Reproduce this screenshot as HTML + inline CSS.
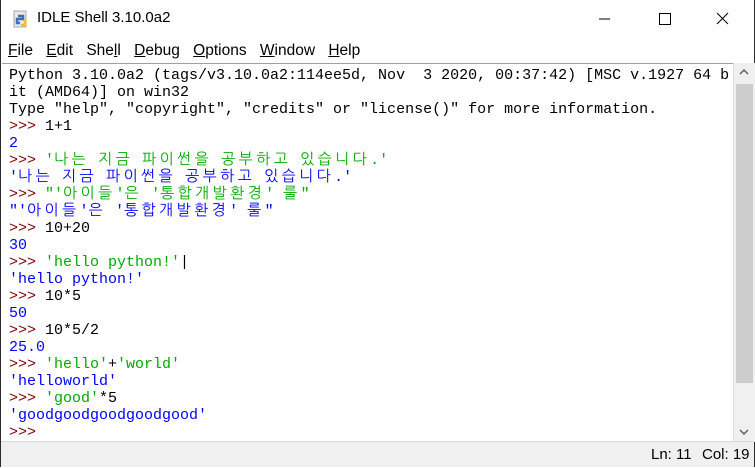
<!DOCTYPE html>
<html><head><meta charset="utf-8"><style>
body{margin:0;width:755px;height:468px;overflow:hidden;background:#fff;font-family:"Liberation Sans",sans-serif;}
.win{position:absolute;left:0;top:0;width:753px;height:466px;border:1px solid #2b2b2b;border-top:none;background:#fff;}
.title{position:absolute;left:36px;top:9px;font-size:15px;color:#000;}
.menu{position:absolute;left:7px;top:42px;font-size:15.5px;color:#000;}
.menu span{margin-right:9px;}
.text{position:absolute;left:1px;top:63px;width:731px;height:378px;border-top:1px solid #a0a0a0;background:#fff;}
pre{margin:0;position:absolute;left:7px;top:3px;font-family:"Liberation Mono","NanumGothic",monospace;font-size:15px;line-height:17px;color:#000;}
.k{letter-spacing:3.4px;}
.p{color:#7f0000}.s{color:#00aa00}.o{color:#0000ff}
.sb{position:absolute;left:732px;top:63px;width:21px;height:379px;background:#f0f0f0;border-left:1px solid #e0e0e0;}
.thumb{position:absolute;left:2px;top:21px;width:17px;height:299px;background:#cdcdcd;}
.status{position:absolute;left:0;top:441px;width:753px;height:25px;background:#f0f0f0;border-top:1px solid #d8d8d8;font-size:15px;}
</style></head><body>
<div class="win">
<svg style="position:absolute;left:12px;top:10px" width="16" height="18" viewBox="0 0 16 18"><rect x="1" y="1" width="12" height="16" fill="#e8e8e8" stroke="#aaa"/><path d="M5 6h5v3H4v4h3" stroke="#3a6fb0" stroke-width="2.5" fill="none"/><path d="M12 10v5H8" stroke="#f0c020" stroke-width="2.5" fill="none"/></svg>
<div class="title">IDLE Shell 3.10.0a2</div>
<svg style="position:absolute;left:598px;top:10px" width="150" height="18"><line x1="0" y1="9" x2="11" y2="9" stroke="#000"/><rect x="60.5" y="3.5" width="11" height="11" fill="none" stroke="#000"/><path d="M118 3l11 11M129 3l-11 11" stroke="#000"/></svg>
<div class="menu"><span><u>F</u>ile</span> <span><u>E</u>dit</span> <span>She<u>l</u>l</span> <span><u>D</u>ebug</span> <span><u>O</u>ptions</span> <span><u>W</u>indow</span> <span><u>H</u>elp</span></div>
<div class="text"><pre>Python 3.10.0a2 (tags/v3.10.0a2:114ee5d, Nov  3 2020, 00:37:42) [MSC v.1927 64 b
it (AMD64)] on win32
Type "help", "copyright", "credits" or "license()" for more information.
<span class="p">&gt;&gt;&gt; </span>1+1
<span class="o">2</span>
<span class="p">&gt;&gt;&gt; </span><span class="s">'<span class="k">나는</span> <span class="k">지금</span> <span class="k">파이썬을</span> <span class="k">공부하고</span> <span class="k">있습니다</span>.'</span>
<span class="o">'<span class="k">나는</span> <span class="k">지금</span> <span class="k">파이썬을</span> <span class="k">공부하고</span> <span class="k">있습니다</span>.'</span>
<span class="p">&gt;&gt;&gt; </span><span class="s">"'<span class="k">아이들</span>'<span class="k">은</span> '<span class="k">통합개발환경</span>' <span class="k">룰</span>"</span>
<span class="o">"'<span class="k">아이들</span>'<span class="k">은</span> '<span class="k">통합개발환경</span>' <span class="k">룰</span>"</span>
<span class="p">&gt;&gt;&gt; </span>10+20
<span class="o">30</span>
<span class="p">&gt;&gt;&gt; </span><span class="s">'hello python!'</span>|
<span class="o">'hello python!'</span>
<span class="p">&gt;&gt;&gt; </span>10*5
<span class="o">50</span>
<span class="p">&gt;&gt;&gt; </span>10*5/2
<span class="o">25.0</span>
<span class="p">&gt;&gt;&gt; </span><span class="s">'hello'</span>+<span class="s">'world'</span>
<span class="o">'helloworld'</span>
<span class="p">&gt;&gt;&gt; </span><span class="s">'good'</span>*5
<span class="o">'goodgoodgoodgoodgood'</span>
<span class="p">&gt;&gt;&gt; </span></pre></div>
<div class="sb"><div class="thumb"></div>
<svg style="position:absolute;left:5px;top:6px" width="10" height="6"><path d="M1 5l4-4 4 4" stroke="#606060" stroke-width="1.5" fill="none"/></svg>
<svg style="position:absolute;left:5px;top:366px" width="10" height="6"><path d="M1 1l4 4 4-4" stroke="#606060" stroke-width="1.5" fill="none"/></svg></div>
<div class="status"><span style="position:absolute;left:650px;top:4px">Ln: 11</span><span style="position:absolute;left:701px;top:4px">Col: 19</span></div>
</div>
</body></html>
